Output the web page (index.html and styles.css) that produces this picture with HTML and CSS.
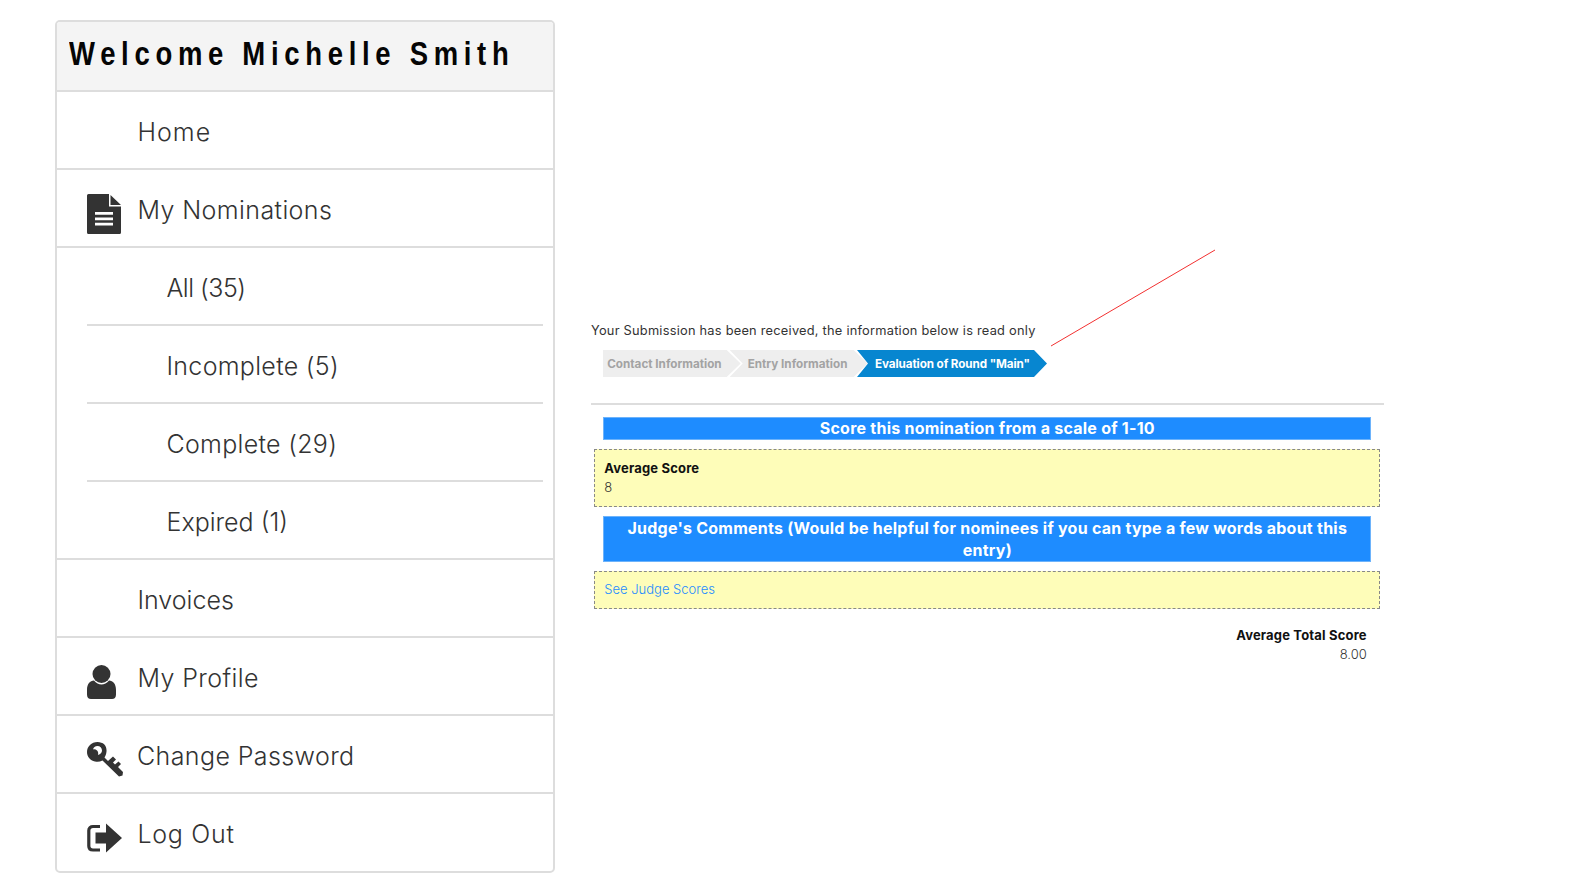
FILE: index.html
```html
<!DOCTYPE html>
<html lang="en">
<head>
<meta charset="utf-8">
<title>Evaluation</title>
<link rel="stylesheet" href="styles.css">
</head>
<body>
<div class="page">
  <nav class="sidebar">
    <div class="welcome"><span class="welcome-text">Welcome Michelle Smith</span></div>
    <a class="item"><span class="ico"></span><span class="wide">Home</span></a>
    <a class="item"><span class="ico"><svg width="34" height="40" viewBox="0 0 34 40"><path fill="#333" d="M1.500 0H22V12.600H34V38.500a1.500 1.500 0 0 1-1.500 1.500H1.500A1.500 1.500 0 0 1 0 38.500V1.500A1.500 1.500 0 0 1 1.500 0ZM23.500 1 34 11H23.500Z"/><path fill="#fff" d="M8 18H26V20.800H8ZM8 23.400H26V26.200H8ZM8 28.800H26V31.600H8Z"/></svg></span><span>My Nominations</span></a>
    <div class="sub first"><span class="narrow">All (35)</span></div>
    <div class="sub"><span>Incomplete (5)</span></div>
    <div class="sub"><span>Complete (29)</span></div>
    <div class="sub last"><span class="snug">Expired (1)</span></div>
    <a class="item"><span class="ico"></span><span class="snug">Invoices</span></a>
    <a class="item"><span class="ico"><svg width="29" height="34" viewBox="0 0 29 34"><circle cx="14.500" cy="9" r="9" fill="#333"/><path fill="#333" d="M0 25C0 19 3 15.500 7 15.500 9 18 12 19.500 14.500 19.500S20 18 22 15.500C26 15.500 29 19 29 25V29.500C29 32.500 27.500 34 25 34H4C1.500 34 0 32.500 0 29.500Z"/></svg></span><span>My Profile</span></a>
    <a class="item"><span class="ico"><svg width="38" height="36" viewBox="0 0 38 36"><path fill="#333" fill-rule="evenodd" d="M10.500 0C16.500 0 20 4 19.500 9.500 19.200 12.500 18.500 14 17.500 15.500L21 19 26 14.500 29 17.500 26 20.500 28 22.500 31.500 19.500 34 22 31 25 36 30 35.500 33.500 32 34.500 15.500 18.500C13 19.800 10.500 20 8 19.500 3 18.500 0 14.500 0 10 0 4.500 4.500 0 10.500 0ZM10.500 4C8 4 6.500 5.500 6 7.500 7.500 7 9 7.500 10 8.500 11 9.500 11.500 11 11 13 13.500 12.500 15 10.500 15 8.500 15 6 13 4 10.500 4Z"/></svg></span><span class="pw">Change Password</span></a>
    <a class="item end"><span class="ico"><svg width="35" height="30" viewBox="0 0 35 30"><path fill="none" stroke="#333" stroke-width="3.200" d="M13 3.500H6C3.500 3.500 1.800 5 1.800 7.500V23C1.800 25.500 3.500 27 6 27H13"/><path fill="#333" d="M8.500 9.500H19V0.500L35 15 19 29.500V20.500H8.500Z"/></svg></span><span class="mid">Log Out</span></a>
  </nav>
  <main class="content">
    <p class="notice">Your Submission has been received, the information below is read only</p>
    <ol class="steps">
      <li class="step one">Contact Information</li>
      <li class="step two">Entry Information</li>
      <li class="step three">Evaluation of Round "Main"</li>
    </ol>
    <hr class="rule">
    <h2 class="bar">Score this nomination from a scale of 1-10</h2>
    <section class="field avg">
      <div class="label">Average Score</div>
      <div class="value">8</div>
    </section>
    <h2 class="bar tall">Judge's Comments (Would be helpful for nominees if you can type a few words about this entry)</h2>
    <section class="field link-box">
      <a class="link">See Judge Scores</a>
    </section>
    <div class="total">
      <div class="label">Average Total Score</div>
      <div class="value">8.00</div>
    </div>
  </main>
</div>
<svg class="arrow" width="170" height="100" viewBox="0 0 170 100"><line x1="2" y1="98" x2="166" y2="2" stroke="#f23030" stroke-width="1"/></svg>
</body>
</html>
```
FILE: styles.css
```css
* { box-sizing: border-box; }
html, body { margin: 0; padding: 0; background: #fff; height: 100%; overflow: hidden; }
body { font-family: Inter, "Open Sans", sans-serif; color: #333; position: relative; }
.page { display: flex; align-items: flex-start; padding: 20px 0 0 55px; }

.sidebar { width: 499.500px; flex: none; border: 2px solid #ddd; border-radius: 5px; overflow: hidden; }
.welcome { height: 70px; background: #f4f4f4; border-bottom: 2px solid #ddd; padding: 11px 0 0 12px; }
.welcome-text { display: inline-block; transform: scaleX(0.82); transform-origin: left center; font-family: "Liberation Sans", sans-serif; font-size: 33.500px; font-weight: 700; line-height: 42px; color: #050505; letter-spacing: 6.950px; white-space: nowrap; }
.item { display: flex; align-items: center; height: 78px; padding: 3px 0 0 29.500px; border-bottom: 2px solid #ddd; font-size: 25px; font-weight: 300; color: #333; letter-spacing: 0.400px; white-space: nowrap; }
.item.end { border-bottom: 0; height: 77px; }
.ico { width: 51px; flex: none; display: flex; align-items: center; height: 44px; position: relative; top: 4px; }
.pw { margin-left: -0.500px; }
.wide { letter-spacing: 1px; }
.mid { letter-spacing: 0.700px; }
.narrow { letter-spacing: -0.500px; }
.snug { letter-spacing: 0; }
.sub { height: 78px; margin-left: 29.500px; margin-right: 10px; padding: 3px 0 0 80px; display: flex; align-items: center; border-bottom: 2px solid #ddd; font-size: 25px; font-weight: 300; letter-spacing: 0.300px; }
.sub.last { margin: 0; padding-left: 109.500px; }

.content { width: 793px; margin-left: 36.500px; padding-top: 302px; }
.notice { margin: 0; font-size: 12.800px; line-height: 17px; color: #333; letter-spacing: 0.240px; white-space: nowrap; }
.steps { list-style: none; display: flex; margin: 11px 0 0 11.700px; padding: 0; height: 27px; }
.step { height: 27px; display: flex; align-items: center; font-size: 11.700px; font-weight: 700; white-space: nowrap; flex: none; }
.one { width: 138px; padding-left: 4.500px; background: #eee; color: #a3a3a3; clip-path: polygon(0 0, 124px 0, 138px 50%, 124px 100%, 0 100%); }
.two { width: 138px; margin-left: -11px; padding-left: 18px; background: #eee; color: #a3a3a3; clip-path: polygon(0 0, 124px 0, 138px 50%, 124px 100%, 0 100%, 13px 50%); }
.three { width: 190px; margin-left: -10.700px; padding-left: 18px; background: #0786d0; color: #fff; letter-spacing: -0.100px; clip-path: polygon(0 0, 177px 0, 190px 50%, 177px 100%, 0 100%, 11px 50%); }
.rule { border: 0; border-top: 2px solid #ddd; margin: 25.500px 0 0; height: 0; }
.bar { margin: 12px 12.700px 0 12.300px; padding: 0 18px; background: #1e8cff; border: 1px solid #6db3fb; color: #fff; font-size: 16px; font-weight: 700; letter-spacing: 0.240px; line-height: 21.500px; text-align: center; height: 23px; }
.tall { margin-top: 9px; height: 46px; line-height: 22.500px; }
.field { margin: 9px 4px 0 3.300px; background: #fefdb9; border: 1px dashed #888; padding: 9px; }
.avg { height: 58px; }
.link-box { height: 38px; padding-top: 8.500px; }
.label { font-size: 13px; font-weight: 700; line-height: 19.500px; color: #111; letter-spacing: 0.170px; }
.value { font-size: 13px; font-weight: 300; line-height: 19.500px; color: #333; }
.link { font-size: 13px; font-weight: 300; line-height: 19px; color: #1e8cff; display: block; }
.total { text-align: right; margin: 17px 17.300px 0 0; }

.arrow { position: absolute; left: 1049px; top: 248px; }
```
